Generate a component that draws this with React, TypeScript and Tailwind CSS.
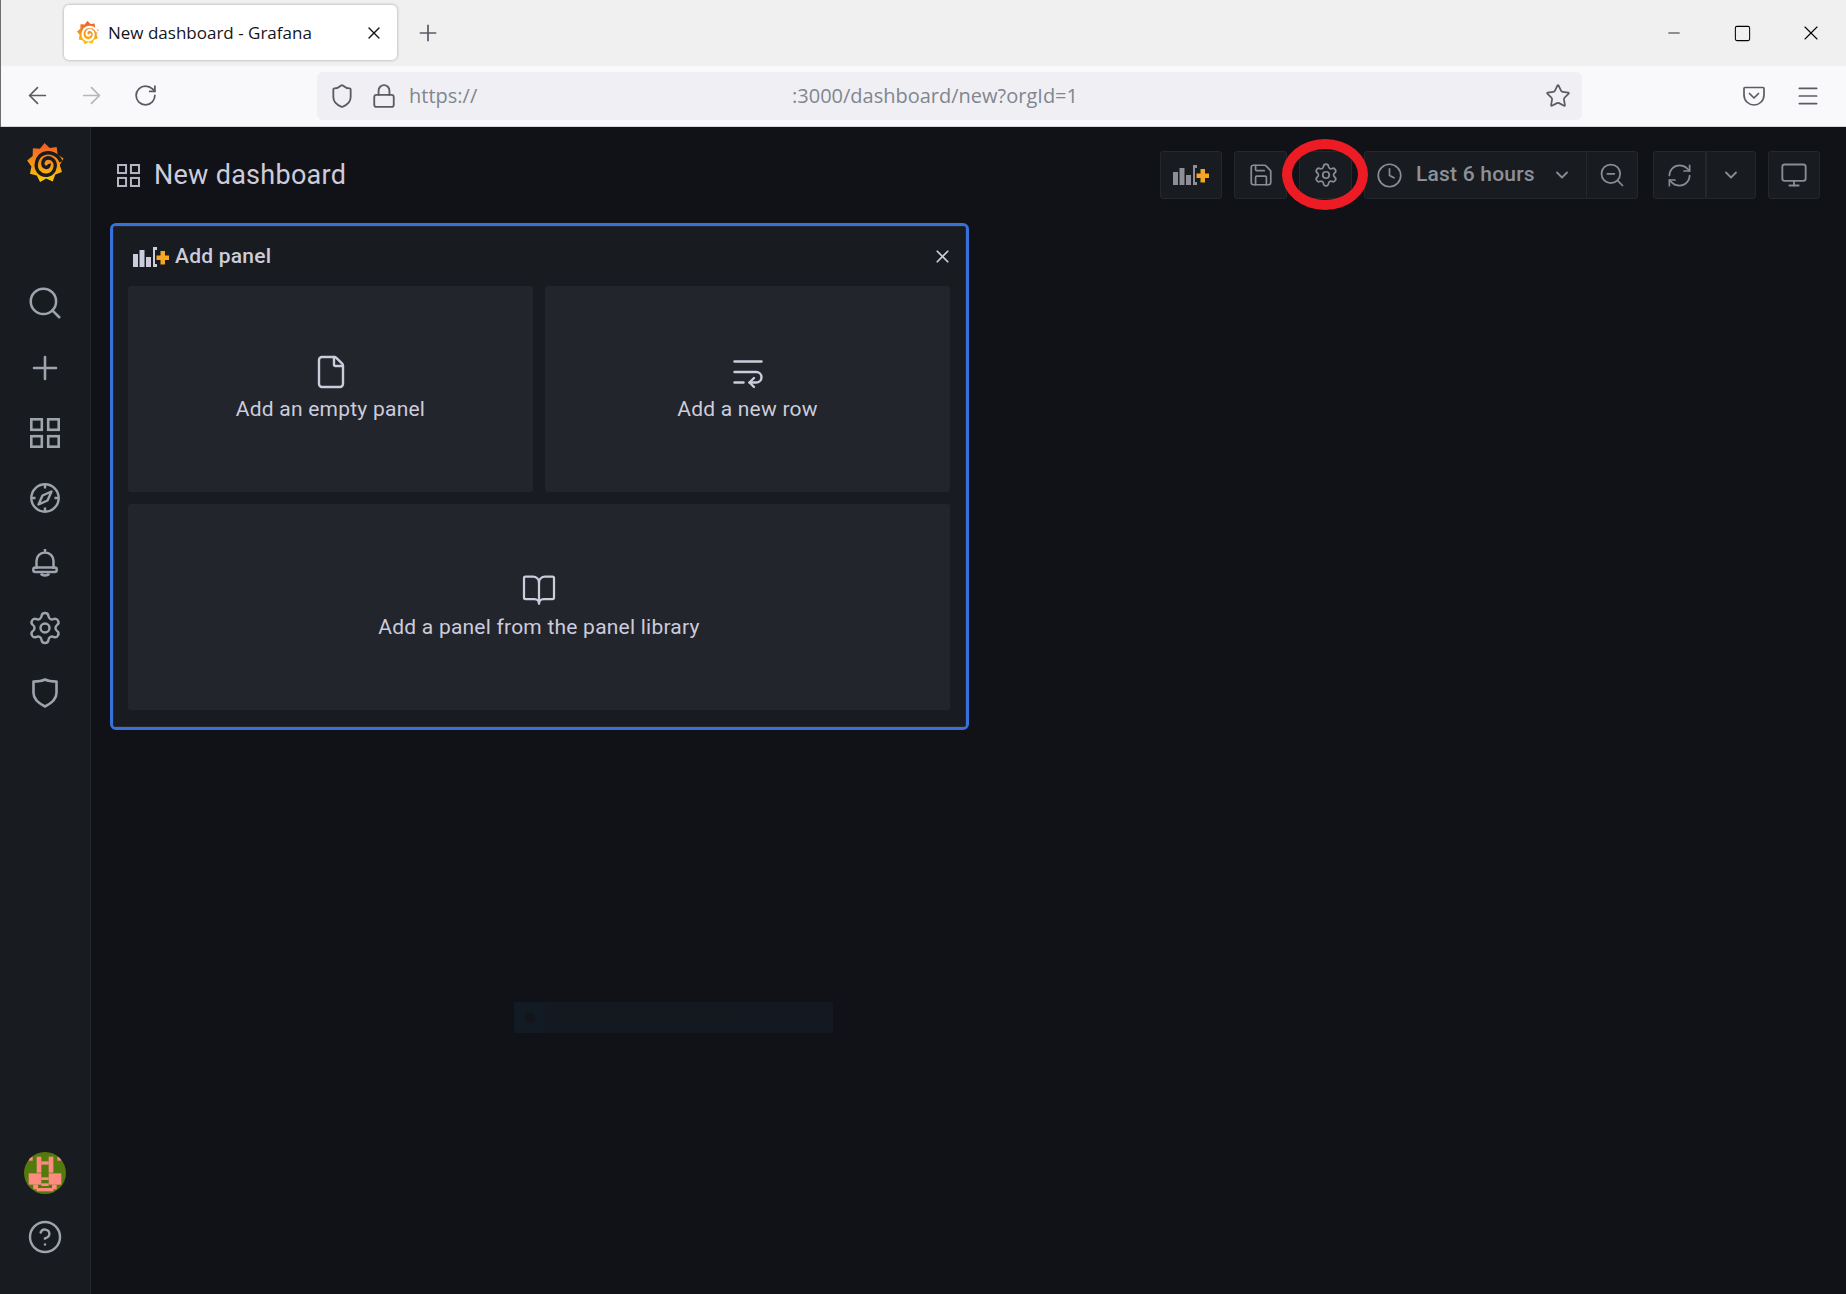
import React from "react";
import {
  Search, Compass, Settings, HelpCircle, X, Save, Clock, ChevronDown, ZoomOut, RefreshCw,
  Monitor, File, BookOpen, ArrowLeft, ArrowRight, RotateCw, Shield, Lock, Star, Plus, Menu, Minus, Square, WrapText,
} from "lucide-react";

function spikes(): string {
  const n = 9;
  const pts: string[] = [];
  for (let i = 0; i < n; i++) {
    const a = (i / n) * Math.PI * 2 - Math.PI / 2 - 0.05;
    const b = ((i + 0.5) / n) * Math.PI * 2 - Math.PI / 2 - 0.05;
    pts.push(`${50 + 50 * Math.cos(a)},${50 + 50 * Math.sin(a)}`);
    pts.push(`${50 + 39 * Math.cos(b)},${50 + 39 * Math.sin(b)}`);
  }
  return pts.join(" ");
}

function GrafanaLogo({ id, spiral, className }: { id: string; spiral: string; className: string }) {
  return (
    <svg viewBox="0 0 100 100" className={className} preserveAspectRatio="none">
      <defs>
        <linearGradient id={id} x1="0" y1="0" x2="0" y2="1">
          <stop offset="0" stopColor="#f05a28" />
          <stop offset="1" stopColor="#fbca0a" />
        </linearGradient>
      </defs>
      <polygon points={spikes()} fill={`url(#${id})`} />
      <path
        d="M92 47 C84 28 62 20 44 27 C26 34 19 58 31 72 C45 87 72 82 76 60 C79 43 62 33 50 39 C40 45 40 60 52 61 C58 61 61 56 60 52"
        fill="none"
        stroke={spiral}
        strokeWidth="9"
        strokeLinecap="butt"
      />
    </svg>
  );
}

function AddPanelIcon({ bar }: { bar: string }) {
  return (
    <svg width="36" height="20" viewBox="0 0 36 20" fill={bar}>
      <rect x="0" y="7" width="5" height="13" />
      <rect x="6.5" y="3" width="5" height="17" />
      <rect x="13" y="10" width="5" height="10" />
      <path d="M20 0h4v3h-2v14h2v3h-4z" />
      <path d="M27.5 4h4.5v4.5h4v4.5h-4v4.5h-4.5v-4.5h-4v-4.5h4z" fill="#f5a623" />
    </svg>
  );
}

function GridIcon({ size, color }: { size: number; color: string }) {
  return (
    <svg width={size} height={size} viewBox="0 0 30 30" fill="none" stroke={color} strokeWidth="2.6">
      <rect x="1.3" y="1.3" width="10.5" height="10.5" />
      <rect x="18.2" y="1.3" width="10.5" height="10.5" />
      <rect x="1.3" y="18.2" width="10.5" height="10.5" />
      <rect x="18.2" y="18.2" width="10.5" height="10.5" />
    </svg>
  );
}

const nav = "#9ea3ad";

function NavCell({ children }: { children: React.ReactNode }) {
  return <div className="flex h-[65px] w-full items-center justify-center">{children}</div>;
}

function Avatar() {
  const pink = "#ff8a80";
  const boxes: [number, number, number, number][] = [
    [14, 14, 12, 12], [100, 14, 12, 12],
    [38, 14, 14, 48], [74, 14, 14, 48], [52, 28, 22, 10],
    [14, 64, 38, 34], [74, 64, 38, 34], [28, 98, 14, 14], [84, 98, 14, 14],
    [52, 76, 22, 8], [52, 94, 22, 8], [38, 108, 50, 10],
  ];
  return (
    <svg width="42" height="42" viewBox="0 0 126 126" className="rounded-full bg-[#537a0c]">
      {boxes.map(([x, y, w, h], i) => (
        <rect key={i} x={x} y={y} width={w} height={h} fill={pink} />
      ))}
    </svg>
  );
}

function Sidebar() {
  return (
    <aside className="flex h-full w-[91px] shrink-0 flex-col items-center border-r border-[#25282d] bg-[#181b1f]">
      <div className="flex h-[143px] w-full justify-center pt-[16px]">
        <GrafanaLogo id="logo-main" spiral="#181b1f" className="h-[40px] w-[37px]" />
      </div>
      <NavCell><Search size={38} strokeWidth={1.6} color={nav} /></NavCell>
      <NavCell>
        <svg width="26" height="26" viewBox="0 0 26 26" stroke={nav} strokeWidth="2.6" strokeLinecap="round">
          <path d="M13 2v22M2 13h22" />
        </svg>
      </NavCell>
      <NavCell><GridIcon size={30} color={nav} /></NavCell>
      <NavCell>
        <svg width="30" height="30" viewBox="0 0 30 30" fill="none" stroke={nav} strokeWidth="2.4">
          <circle cx="15" cy="15" r="13.7" />
          <path d="M15 1.5v4M15 24.5v4M1.5 15h4M24.5 15h4" />
          <path d="M21.5 8.5 L17.5 17.5 L8.5 21.5 L12.5 12.5 Z" strokeLinejoin="round" />
        </svg>
      </NavCell>
      <NavCell>
        <svg width="26" height="30" viewBox="0 0 26 30" fill="none" stroke={nav} strokeWidth="2.5" strokeLinejoin="round">
          <path d="M13 1v3M4.5 21V13a8.5 8.5 0 0 1 17 0v8" />
          <rect x="1.3" y="19.5" width="23.4" height="4.5" rx="2" />
          <path d="M9 25.5c1 2.5 7 2.5 8 0" />
        </svg>
      </NavCell>
      <NavCell><Settings size={36} strokeWidth={1.6} color={nav} /></NavCell>
      <NavCell>
        <svg width="26" height="30" viewBox="0 0 26 30" fill="none" stroke={nav} strokeWidth="2.6" strokeLinejoin="round">
          <path d="M1.5 3.5 C6 3.5 10 3 13 1.5 C16 3 20 3.5 24.5 3.5 V15 C24.5 21 19 25.5 13 28.5 C7 25.5 1.5 21 1.5 15 Z" />
        </svg>
      </NavCell>
      <div className="mt-auto flex w-full flex-col items-center pb-[25px]">
        <div className="flex h-[64px] items-center justify-center"><Avatar /></div>
        <div className="flex h-[64px] items-center justify-center">
          <HelpCircle size={36} strokeWidth={1.6} color={nav} />
        </div>
      </div>
    </aside>
  );
}

function ToolBtn({ w, children, className = "" }: { w: string; children: React.ReactNode; className?: string }) {
  return (
    <div className={`flex h-[48px] items-center justify-center rounded-[3px] border border-[#24272c] bg-[#181b1f] ${w} ${className}`}>
      {children}
    </div>
  );
}

const tool = "#8a8c94";

function Toolbar() {
  return (
    <div className="flex items-center">
      <ToolBtn w="w-[62px]"><AddPanelIcon bar="#8e8e96" /></ToolBtn>
      <ToolBtn w="w-[53px]" className="ml-[12px]"><Save size={26} strokeWidth={1.6} color={tool} /></ToolBtn>
      <ToolBtn w="w-[53px]" className="ml-[12px]"><Settings size={26} strokeWidth={1.6} color={tool} /></ToolBtn>
      <ToolBtn w="w-[223px]" className="ml-[12px] justify-start rounded-r-none pl-[11px]">
        <div className="flex w-full items-center">
          <Clock size={27} strokeWidth={1.5} color={tool} />
          <span className="ml-[13px] text-[21px] font-medium tracking-[0.01em] text-[#8e9099]">Last 6 hours</span>
          <ChevronDown size={20} strokeWidth={2.2} color={tool} className="ml-[17px]" />
        </div>
      </ToolBtn>
      <ToolBtn w="w-[52px]" className="-ml-px rounded-l-none"><ZoomOut size={28} strokeWidth={1.5} color={tool} /></ToolBtn>
      <ToolBtn w="w-[53px]" className="ml-[15px] rounded-r-none"><RefreshCw size={27} strokeWidth={1.5} color={tool} /></ToolBtn>
      <ToolBtn w="w-[50px]" className="rounded-l-none"><ChevronDown size={20} strokeWidth={2.2} color={tool} /></ToolBtn>
      <ToolBtn w="w-[52px]" className="ml-[12px]"><Monitor size={28} strokeWidth={1.6} color={tool} /></ToolBtn>
    </div>
  );
}

function Card({ icon, label, className = "" }: { icon: React.ReactNode; label: string; className?: string }) {
  return (
    <div className={`flex h-[206px] flex-col items-center justify-center rounded-[3px] bg-[#22252b] pb-[3px] ${className}`}>
      <div className="flex h-[36px] items-center justify-center">{icon}</div>
      <div className="mt-[7px] text-[21px] leading-[24px] tracking-[0.0107em] text-[#ccccdc]">{label}</div>
    </div>
  );
}

function AddPanel() {
  return (
    <div className="ml-[19px] h-[507px] w-[859px] rounded-[6px] border-[3px] border-[#3871dc]">
      <div className="flex h-full flex-col rounded-[3px] border border-[#24272c] bg-[#181b1f] pl-[14px] pr-[15px]">
        <div className="flex h-[59px] shrink-0 items-center pl-[5px] pr-[-1px]">
          <AddPanelIcon bar="#ccccdc" />
          <span className="ml-[6px] text-[21px] font-medium tracking-[0.0107em] text-[#ccccdc]">Add panel</span>
          <X size={21} strokeWidth={2} color="#ccccdc" className="ml-auto mr-[-3px]" />
        </div>
        <div className="grid grid-cols-2 gap-[12px]">
          <Card label="Add an empty panel" icon={<File size={36} strokeWidth={1.6} color="#ccccdc" />} />
          <Card label="Add a new row" icon={<WrapText size={36} strokeWidth={1.6} color="#ccccdc" />} />
          <Card className="col-span-2" label="Add a panel from the panel library" icon={<BookOpen size={36} strokeWidth={1.5} color="#ccccdc" />} />
        </div>
      </div>
    </div>
  );
}

function BrowserChrome() {
  const chromeFont = "font-['Open_Sans','Noto_Sans',sans-serif]";
  return (
    <div className={`shrink-0 border-l border-[#6e6e6e] ${chromeFont}`}>
      <div className="flex h-[66px] items-center bg-[#f0f0f0] pl-[63px]">
        <div className="mt-[-1px] flex h-[55px] w-[333px] items-center rounded-[5px] bg-white pl-[13px] pr-[13px] shadow-[0_0_3px_rgba(0,0,0,0.35)]">
          <GrafanaLogo id="logo-fav" spiral="#ffffff" className="h-[24px] w-[22px]" />
          <span className="ml-[9px] text-[17px] text-[#15141a]">New dashboard - Grafana</span>
          <X size={20} strokeWidth={1.6} color="#15141a" className="ml-auto" />
        </div>
        <Plus size={26} strokeWidth={1.6} color="#5b5b66" className="ml-[18px]" />
        <div className="ml-auto flex items-center">
          <div className="flex w-[68px] justify-center"><Minus size={18} strokeWidth={1.1} color="#000" /></div>
          <div className="flex w-[68px] justify-center"><Square size={19} strokeWidth={1.3} color="#000" /></div>
          <div className="flex w-[70px] justify-center"><X size={24} strokeWidth={1.1} color="#000" /></div>
        </div>
      </div>
      <div className="flex h-[61px] items-center border-b border-[#d5d5da] bg-[#f9f9fb] pl-[9px] pb-px">
        <div className="flex w-[54px] justify-center"><ArrowLeft size={27} strokeWidth={1.5} color="#5b5b66" /></div>
        <div className="flex w-[54px] justify-center"><ArrowRight size={27} strokeWidth={1.5} color="#b5b5ba" /></div>
        <div className="flex w-[54px] justify-center"><RotateCw size={25} strokeWidth={1.7} color="#5b5b66" /></div>
        <div className="ml-[145px] flex h-[48px] w-[1265px] items-center rounded-[6px] bg-[#f0f0f4] pl-[12px] pr-[11px]">
          <Shield size={26} strokeWidth={1.7} color="#5b5b66" />
          <Lock size={26} strokeWidth={1.7} color="#5b5b66" className="ml-[16px]" />
          <span className="ml-[12px] w-[383px] text-[20px] text-[#80868f]">https://</span>
          <span className="text-[20px] text-[#80868f]">:3000/dashboard/new?orgId=1</span>
          <Star size={26} strokeWidth={1.6} color="#5b5b66" className="ml-auto" />
        </div>
        <div className="ml-[157px] flex w-[30px] justify-center">
          <svg width="24" height="24" viewBox="0 0 24 24" fill="none" stroke="#5b5b66" strokeWidth="1.7" strokeLinejoin="round" strokeLinecap="round">
            <path d="M3 3.5h18a1 1 0 0 1 1 1V11c0 6-5 10-10 10S2 17 2 11V4.5a1 1 0 0 1 1-1z" />
            <path d="M7.5 9.5L12 14l4.5-4.5" />
          </svg>
        </div>
        <div className="ml-[24px] flex w-[30px] justify-center"><Menu size={26} strokeWidth={1.6} color="#5b5b66" /></div>
      </div>
    </div>
  );
}

export default function App() {
  return (
    <div className="relative flex h-[1294px] w-[1846px] flex-col overflow-hidden bg-[#111217] font-['Roboto',sans-serif]">
      <BrowserChrome />
      <div className="flex min-h-0 flex-1">
        <Sidebar />
        <main className="flex min-w-0 flex-1 flex-col">
          <header className="flex h-[96px] shrink-0 items-center justify-between pl-[26px] pr-[26px]">
            <div className="flex items-center">
              <GridIcon size={23} color="#b4b6c4" />
              <h1 className="ml-[14px] text-[27px] font-normal tracking-[0.01em] text-[#ccccdc]">New dashboard</h1>
            </div>
            <Toolbar />
          </header>
          <AddPanel />
        </main>
      </div>

      {/* annotation ring drawn over the toolbar */}
      <div className="absolute left-[1282px] top-[139px] h-[71px] w-[86px] rounded-[50%] border-[10px] border-[#ed1c24]" />

      {/* ghost of a screenshot-tool hint, barely visible */}
      <div className="absolute left-[514px] top-[1002px] flex h-[31px] w-[319px] items-center bg-[#141820] font-['Open_Sans',sans-serif]">
        <div className="flex h-full w-[31px] items-center justify-center bg-[#121a24]">
          <div className="h-[10px] w-[10px] rounded-full bg-[#14151a]" />
        </div>
        <span className="ml-[11px] text-[17px] text-[#16181d]">Fenster ausschneiden</span>
      </div>
    </div>
  );
}
